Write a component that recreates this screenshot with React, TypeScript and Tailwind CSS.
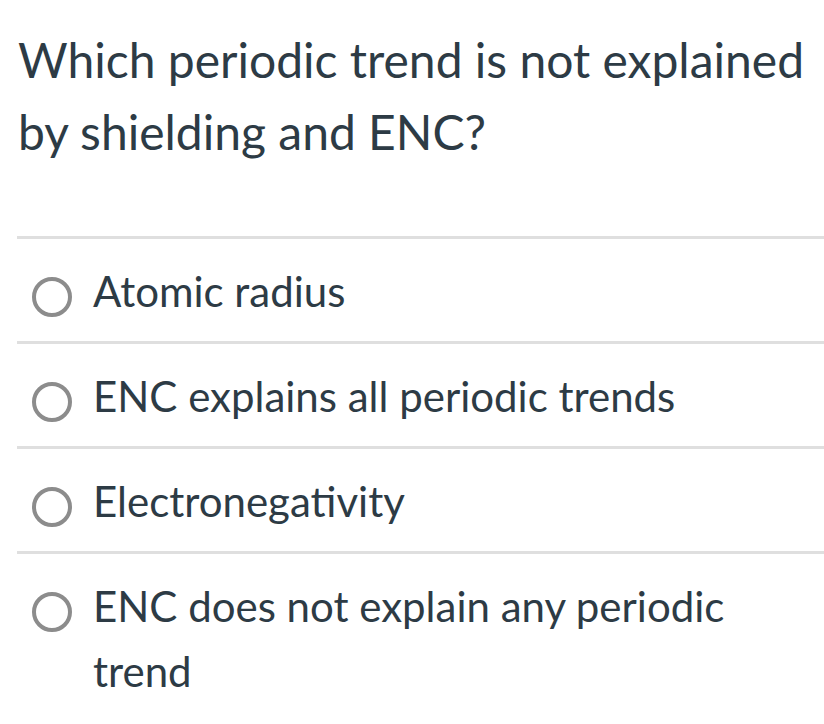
import React from 'react';

const options: string[] = [
    'Atomic radius',
    'ENC explains all periodic trends',
    'Electronegativity',
    'ENC does not explain any periodic trend',
];

const RadioCircle: React.FC = () => (
    <span className="mt-[18px] h-[40px] w-[40px] shrink-0 rounded-full border-[4px] border-[#8c8c8c] bg-white" />
);

export default function App() {
    return (
        <div className="min-h-[724px] w-[824px] bg-white text-[#2d3b45] font-['Lato','Noto_Sans',sans-serif]">
            <h1 className="pl-[18px] pr-4 pt-[24px] text-[48px] leading-[72px] font-normal">
                Which periodic trend is not explained by shielding and ENC?
            </h1>

            <ul className="mt-[68px] ml-[17px]">
                {options.map((opt) => (
                    <li key={opt} className="flex items-start gap-[21px] border-t-[3px] border-[#dfdfdf] pl-[15px] pr-[60px] pt-[20px] pb-[17px]">
                        <RadioCircle />
                        <span className="text-[42px] leading-[65px]">{opt}</span>
                    </li>
                ))}
            </ul>
        </div>
    );
}
